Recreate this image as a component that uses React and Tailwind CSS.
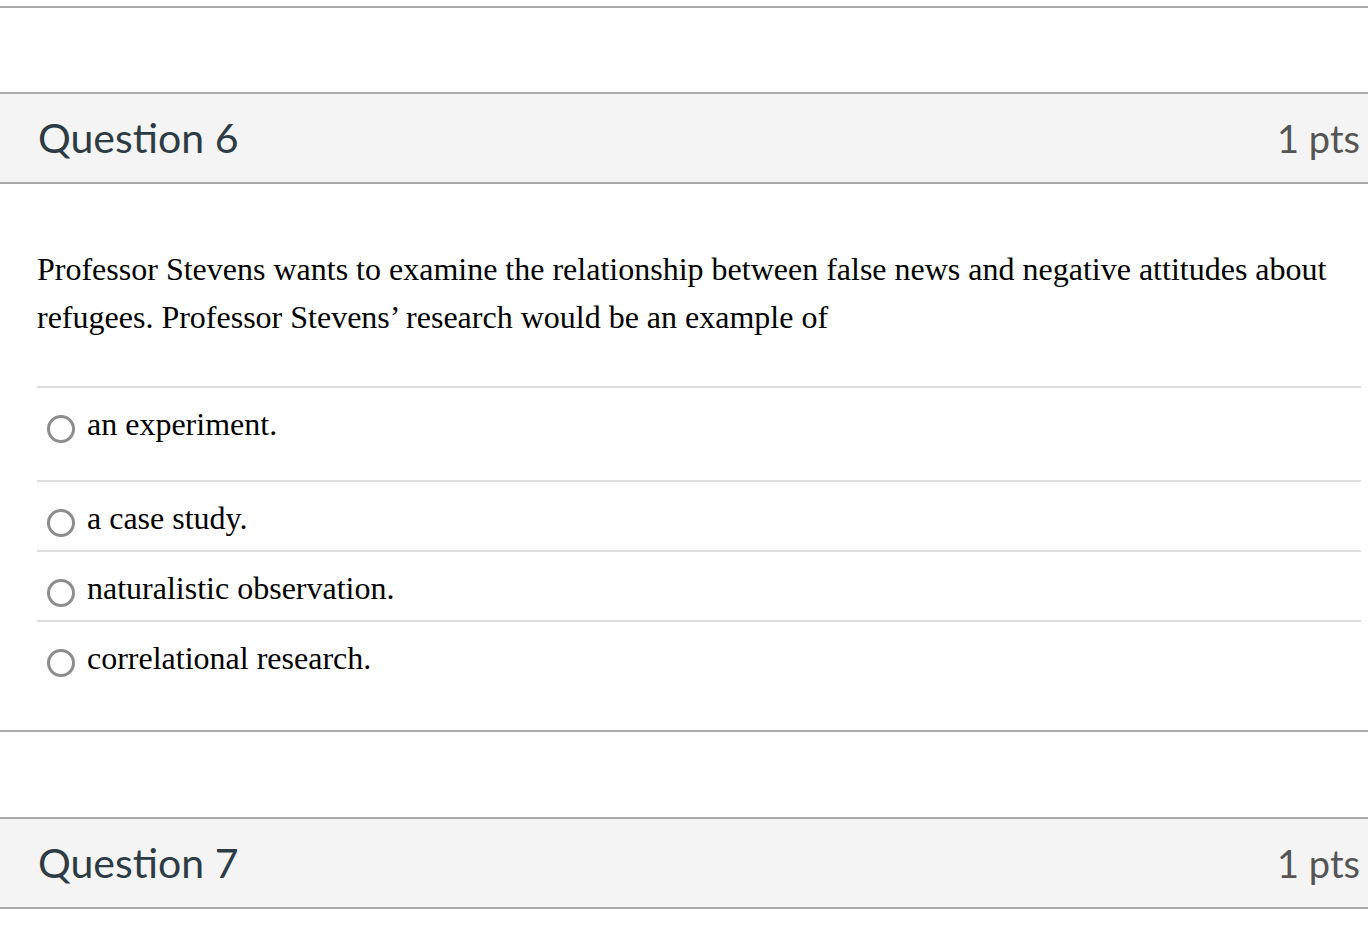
import React from "react";

function Header({ n }) {
  return (
    <div className="flex h-[92px] items-center justify-between border-y-2 border-[#aaaaaa] bg-[#f4f4f4] pl-[38px] pr-[8px]" style={{ fontFamily: "Lato, 'Noto Sans', sans-serif" }}>
      <span className="text-[41px] text-[#2d3b45]">Question {n}</span>
      <span className="text-[38px] text-[#555555]">1 pts</span>
    </div>
  );
}

function Radio() {
  return <span className="inline-block h-[28px] w-[28px] shrink-0 rounded-full border-[3px] border-[#8d8d8d] bg-white" />;
}

function Option({ text, h }) {
  return (
    <div className={`flex border-t-2 border-[#dedede] pl-[10px] pt-[22px] ${h}`}>
      <div className="flex items-start gap-[12px]">
        <div className="-mt-[2px]"><Radio /></div>
        <span className="leading-[28px]">{text}</span>
      </div>
    </div>
  );
}

export default function App() {
  return (
    <div className="min-h-[944px] bg-white text-black" style={{ fontFamily: "'Liberation Serif', 'Times New Roman', serif" }}>
      <div className="h-[6px]" />
      <div className="h-[86px] border-t-2 border-[#aaaaaa]" />
      <Header n={6} />
      <div className="px-[37px] pr-[7px] pt-[61px] text-[32px]">
        <p className="leading-[48px]">
          Professor Stevens wants to examine the relationship between false news and negative attitudes about refugees. Professor Stevens’ research would be an example of
        </p>
        <div className="mt-[45px]">
          <Option text="an experiment." h="h-[94px]" />
          <Option text="a case study." h="h-[70px]" />
          <Option text="naturalistic observation." h="h-[70px]" />
          <Option text="correlational research." h="h-[110px]" />
        </div>
      </div>
      <div className="h-[87px] border-t-2 border-[#aaaaaa]" />
      <Header n={7} />
    </div>
  );
}
